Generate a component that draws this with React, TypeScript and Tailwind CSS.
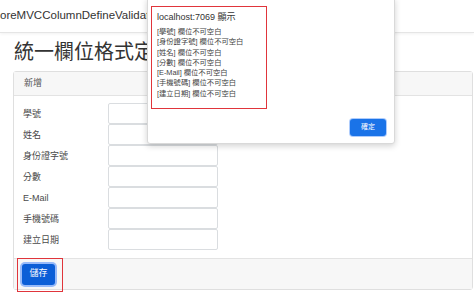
import React from "react";

const fields = ["學號", "姓名", "身份證字號", "分數", "E-Mail", "手機號碼", "建立日期"];
const msgOrder = ["學號", "身份證字號", "姓名", "分數", "E-Mail", "手機號碼", "建立日期"];
const msgs = msgOrder.map((f) => `[${f}] 欄位不可空白`);

export default function App() {
  return (
    <div className="relative w-[474px] h-[302px] overflow-hidden bg-white text-[#212529] font-['Liberation_Sans','Noto_Sans_CJK_TC',sans-serif]">
      {/* navbar */}
      <div className="h-[33px] border-b border-[#e5e5e5] shadow-[0_1px_3px_rgba(0,0,0,0.06)] flex items-center">
        <span className="text-[11.5px] whitespace-nowrap text-[#333] pb-[1px]">oreMVCColumnDefineValidation</span>
      </div>

      <div className="pl-[13px] pr-[1px]">
        <h1 className="text-[20px] leading-[28px] mt-[5px] mb-[5px] font-normal text-[#333] whitespace-nowrap pl-[1px]">
          統一欄位格式定義
        </h1>

        <div className="border border-[#dfdfdf] rounded-[3px]">
          <div className="h-[24px] bg-[#f7f7f7] border-b border-[#e3e3e3] flex items-center pl-[10px] text-[9px] text-[#555]">
            新增
          </div>
          <div className="pt-[7px] pb-[8px] pl-[9px] flex flex-col">
            {fields.map((f) => (
              <div key={f} className="flex items-center h-[21px]">
                <div className="w-[85px] text-[9px] text-[#4a4a4a] pt-[3px]">{f}</div>
                <div className="w-[110px] h-[21px] border border-[#dadde0] rounded-[2px] bg-white" />
              </div>
            ))}
          </div>
          <div className="h-[31px] bg-[#f7f7f7] border-t border-[#e3e3e3] flex items-center pl-[8px]">
            <button className="w-[33px] h-[21px] bg-[#0b5ed7] text-white text-[9px] rounded-[3px] shadow-[0_0_0_2px_rgba(110,160,250,0.7)] flex items-center justify-center">
              儲存
            </button>
          </div>
        </div>
      </div>

      {/* red annotation around save */}
      <div className="absolute left-[17px] top-[258px] w-[46px] h-[34px] border-[1.5px] border-[#e0353b]" />

      {/* alert dialog */}
      <div className="absolute left-[147px] top-[-2px] w-[248px] h-[146px] bg-white border border-[#d9d9d9] rounded-b-[3px] shadow-[0_2px_6px_rgba(0,0,0,0.18)] flex flex-col pt-[7px] pl-[3px] pr-[8px]">
        <div className="w-[116px] h-[103px] border-[1.5px] border-[#e0353b] flex flex-col pl-[5px] pt-[4px]">
          <div className="text-[9px] leading-[12px] text-[#333] whitespace-nowrap">localhost:7069 顯示</div>
          <div className="mt-[4px] flex flex-col text-[7.3px] text-[#444] whitespace-nowrap">
            {msgs.map((m) => (
              <div key={m} className="h-[10.3px] leading-[10.3px] overflow-hidden">{m}</div>
            ))}
          </div>
        </div>
        <div className="flex justify-end mt-[10px]">
          <button className="w-[36px] h-[17px] bg-[#1a73e8] rounded-[3px] text-white text-[7px] flex items-center justify-center shadow-[0_0_0_1px_rgba(120,170,250,0.6)]">
            確定
          </button>
        </div>
      </div>
    </div>
  );
}
